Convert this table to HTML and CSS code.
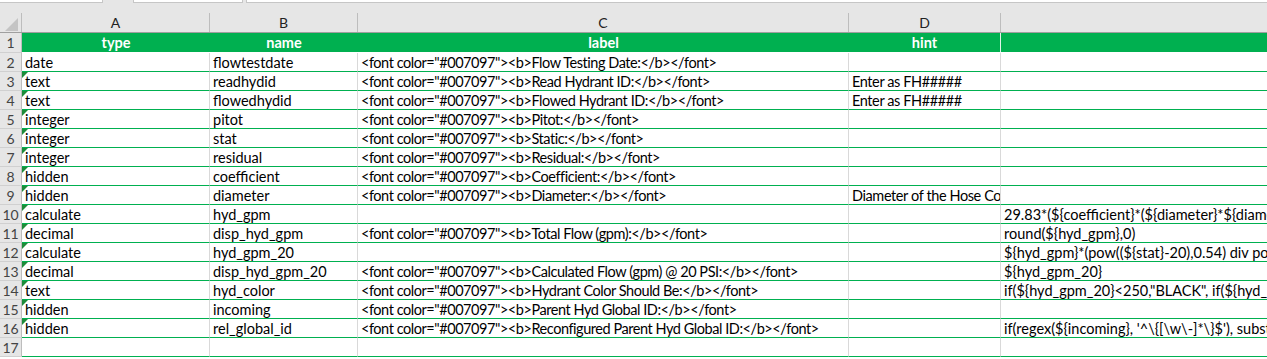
FILE: index.html
```html
<!DOCTYPE html>
<html>
<head>
<meta charset="utf-8">
<link rel="stylesheet" href="styles.css">
</head>
<body>
<div class="topband">
  <div class="box box-name"></div>
  <div class="box box-mid"></div>
  <div class="box box-formula"></div>
</div>
<div class="sheet">
  <div class="row colhdr">
    <div class="c rh corner"><span class="tri"></span></div>
    <div class="c ch">A</div>
    <div class="c ch">B</div>
    <div class="c ch">C</div>
    <div class="c ch">D</div>
    <div class="c ch last"></div>
  </div>
  <div class="row head">
    <div class="c rh">1</div>
    <div class="c hc">type</div>
    <div class="c hc">name</div>
    <div class="c hc">label</div>
    <div class="c hc">hint</div>
    <div class="c hc last"></div>
  </div>
  <div class="row">
    <div class="c rh">2</div>
    <div class="c">date</div>
    <div class="c">flowtestdate</div>
    <div class="c lbl">&lt;font color="#007097"&gt;&lt;b&gt;Flow Testing Date:&lt;/b&gt;&lt;/font&gt;</div>
    <div class="c hint"></div>
    <div class="c last"></div>
  </div>
  <div class="row">
    <div class="c rh">3</div>
    <div class="c err">text</div>
    <div class="c">readhydid</div>
    <div class="c lbl">&lt;font color="#007097"&gt;&lt;b&gt;Read Hydrant ID:&lt;/b&gt;&lt;/font&gt;</div>
    <div class="c hint">Enter as FH#####</div>
    <div class="c last"></div>
  </div>
  <div class="row">
    <div class="c rh">4</div>
    <div class="c err">text</div>
    <div class="c">flowedhydid</div>
    <div class="c lbl">&lt;font color="#007097"&gt;&lt;b&gt;Flowed Hydrant ID:&lt;/b&gt;&lt;/font&gt;</div>
    <div class="c hint">Enter as FH#####</div>
    <div class="c last"></div>
  </div>
  <div class="row">
    <div class="c rh">5</div>
    <div class="c err">integer</div>
    <div class="c">pitot</div>
    <div class="c lbl">&lt;font color="#007097"&gt;&lt;b&gt;Pitot:&lt;/b&gt;&lt;/font&gt;</div>
    <div class="c hint"></div>
    <div class="c last"></div>
  </div>
  <div class="row">
    <div class="c rh">6</div>
    <div class="c err">integer</div>
    <div class="c">stat</div>
    <div class="c lbl">&lt;font color="#007097"&gt;&lt;b&gt;Static:&lt;/b&gt;&lt;/font&gt;</div>
    <div class="c hint"></div>
    <div class="c last"></div>
  </div>
  <div class="row">
    <div class="c rh">7</div>
    <div class="c err">integer</div>
    <div class="c">residual</div>
    <div class="c lbl">&lt;font color="#007097"&gt;&lt;b&gt;Residual:&lt;/b&gt;&lt;/font&gt;</div>
    <div class="c hint"></div>
    <div class="c last"></div>
  </div>
  <div class="row">
    <div class="c rh">8</div>
    <div class="c err">hidden</div>
    <div class="c">coefficient</div>
    <div class="c lbl">&lt;font color="#007097"&gt;&lt;b&gt;Coefficient:&lt;/b&gt;&lt;/font&gt;</div>
    <div class="c hint"></div>
    <div class="c last"></div>
  </div>
  <div class="row">
    <div class="c rh">9</div>
    <div class="c err">hidden</div>
    <div class="c">diameter</div>
    <div class="c lbl">&lt;font color="#007097"&gt;&lt;b&gt;Diameter:&lt;/b&gt;&lt;/font&gt;</div>
    <div class="c hint">Diameter of the Hose Connection</div>
    <div class="c last"></div>
  </div>
  <div class="row">
    <div class="c rh">10</div>
    <div class="c err">calculate</div>
    <div class="c">hyd_gpm</div>
    <div class="c lbl"></div>
    <div class="c hint"></div>
    <div class="c last">29.83*(${coefficient}*(${diameter}*${diameter})*pow(${pitot},0.5))</div>
  </div>
  <div class="row">
    <div class="c rh">11</div>
    <div class="c err">decimal</div>
    <div class="c">disp_hyd_gpm</div>
    <div class="c lbl">&lt;font color="#007097"&gt;&lt;b&gt;Total Flow (gpm):&lt;/b&gt;&lt;/font&gt;</div>
    <div class="c hint"></div>
    <div class="c last">round(${hyd_gpm},0)</div>
  </div>
  <div class="row">
    <div class="c rh">12</div>
    <div class="c err">calculate</div>
    <div class="c">hyd_gpm_20</div>
    <div class="c lbl"></div>
    <div class="c hint"></div>
    <div class="c last">${hyd_gpm}*(pow((${stat}-20),0.54) div pow((${stat}-${residual}),0.54))</div>
  </div>
  <div class="row">
    <div class="c rh">13</div>
    <div class="c err">decimal</div>
    <div class="c">disp_hyd_gpm_20</div>
    <div class="c lbl">&lt;font color="#007097"&gt;&lt;b&gt;Calculated Flow (gpm) @ 20 PSI:&lt;/b&gt;&lt;/font&gt;</div>
    <div class="c hint"></div>
    <div class="c last">${hyd_gpm_20}</div>
  </div>
  <div class="row">
    <div class="c rh">14</div>
    <div class="c err">text</div>
    <div class="c">hyd_color</div>
    <div class="c lbl">&lt;font color="#007097"&gt;&lt;b&gt;Hydrant Color Should Be:&lt;/b&gt;&lt;/font&gt;</div>
    <div class="c hint"></div>
    <div class="c last">if(${hyd_gpm_20}&lt;250,"BLACK", if(${hyd_gpm_20}&lt;500,"RED", if(${hyd_gpm_20}&lt;1000,"ORANGE","GREEN")))</div>
  </div>
  <div class="row">
    <div class="c rh">15</div>
    <div class="c err">hidden</div>
    <div class="c">incoming</div>
    <div class="c lbl">&lt;font color="#007097"&gt;&lt;b&gt;Parent Hyd Global ID:&lt;/b&gt;&lt;/font&gt;</div>
    <div class="c hint"></div>
    <div class="c last"></div>
  </div>
  <div class="row">
    <div class="c rh">16</div>
    <div class="c err">hidden</div>
    <div class="c">rel_global_id</div>
    <div class="c lbl">&lt;font color="#007097"&gt;&lt;b&gt;Reconfigured Parent Hyd Global ID:&lt;/b&gt;&lt;/font&gt;</div>
    <div class="c hint"></div>
    <div class="c last">if(regex(${incoming}, '^\{[\w\-]*\}$'), substr(${incoming},1,37), ${incoming})</div>
  </div>
  <div class="row">
    <div class="c rh">17</div>
    <div class="c"></div>
    <div class="c"></div>
    <div class="c lbl"></div>
    <div class="c hint"></div>
    <div class="c last"></div>
  </div>
</div>
</body>
</html>
```
FILE: styles.css
```css
* { box-sizing: border-box; }
html, body { margin: 0; padding: 0; background: #ffffff; overflow: hidden; }
body {
  width: 1267px;
  height: 359px;
  font-family: Lato, "Liberation Sans", sans-serif;
  font-size: 14.5px;
  color: #000;
}
.topband {
  height: 13px;
  background: #e6e6e6;
  display: flex;
  align-items: flex-start;
}
.box {
  height: 3px;
  background: #fff;
  border-bottom: 1px solid #c6c6c6;
}
.box-name { width: 103px; border-right: 1px solid #c6c6c6; }
.box-mid { width: 110px; margin-left: 30px; border-left: 1px solid #c6c6c6; border-right: 1px solid #c6c6c6; }
.box-formula { flex: 1; margin-left: 3px; border-left: 1px solid #c6c6c6; }

.row {
  display: grid;
  grid-template-columns: 22px 188px 148px 491px 152px 1fr;
  height: 19px;
}
.c {
  border-right: 1px solid #d9d9d9;
  border-bottom: 1px solid #00b050;
  padding: 1px 0 0 3px;
  white-space: nowrap;
  overflow: hidden;
  line-height: 17px;
  position: relative;
}
.c.lbl { letter-spacing: -0.45px; }
.c.hint { letter-spacing: -0.4px; }
.c.last { border-right: none; overflow: hidden; }
.rh {
  background: #e6e6e6;
  border-right: 1px solid #bdbdbd;
  border-bottom: 1px solid #d0d0d0;
  color: #444;
  padding: 1px 0 0 0;
  text-align: center;
  font-size: 14px;
}
.colhdr {
  height: 20px;
  background: #e6e6e6;
  border-bottom: 1px solid #9f9f9f;
}
.colhdr .c {
  border-bottom: none;
  border-right: 1px solid #bdbdbd;
  text-align: center;
  padding: 0;
  color: #222;
  font-size: 14px;
  line-height: 19px;
}
.colhdr .c.last { border-right: none; }
.corner { border-bottom: none; }
.tri {
  position: absolute;
  right: 3px;
  bottom: 1px;
  width: 0;
  height: 0;
  border-left: 13px solid transparent;
  border-bottom: 13px solid #c4c4c4;
}
.head { height: 20px; }
.head .hc {
  background: #00b050;
  color: #fff;
  font-weight: bold;
  text-align: center;
  border-right: none;
  border-bottom: 1px solid #fff;
  padding: 0;
  line-height: 19px;
  letter-spacing: 0;
}
.head .hc:nth-child(5) { border-right: 1px solid #e0f4e8; }
.head .rh { border-bottom: 1px solid #d0d0d0; line-height: 19px; padding: 0; }
.err::before {
  content: "";
  position: absolute;
  left: 0;
  top: 0;
  width: 0;
  height: 0;
  border-top: 6px solid #1e8c3a;
  border-right: 6px solid transparent;
}
```
